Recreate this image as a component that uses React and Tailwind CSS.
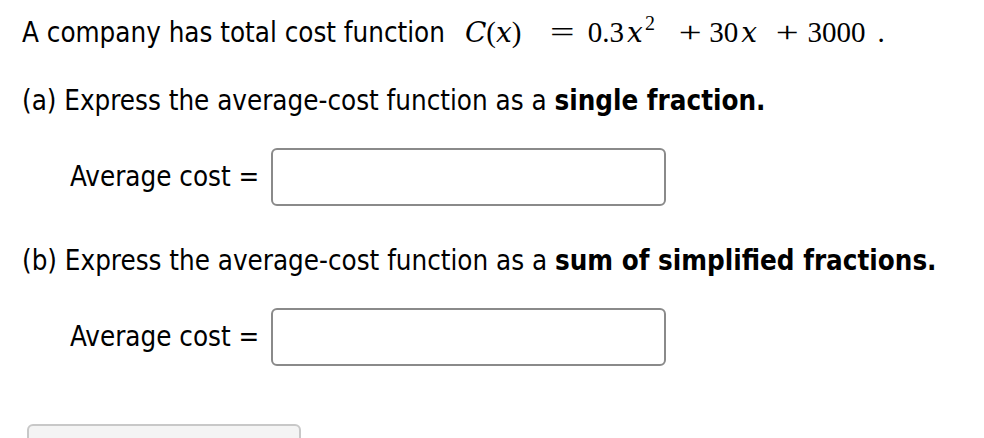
import React from 'react';

const sans = { fontFamily: '"DejaVu Sans Condensed", "DejaVu Sans", sans-serif' };
const serif = { fontFamily: '"Liberation Serif", "DejaVu Serif", serif' };
const mathVar = { fontFamily: '"DejaVu Serif", "Liberation Serif", serif' };

// italic math letter
const V = ({ children, className = '' }) => (
  <i className={`text-[28px] font-normal ${className}`} style={mathVar}>{children}</i>
);

const AnswerRow = () => (
  <div className="flex items-center pl-[48px] h-[58px]">
    <span className="text-[27.5px] text-black mr-[12px]">Average cost =</span>
    <div className="w-[395px] h-[58px] border-2 border-[#8a8a8a] rounded-[6px] bg-white"></div>
  </div>
);

const Formula = () => (
  <span className="text-[29px] ml-[20px] flex items-baseline" style={serif}>
    <span><V>C</V>(<V>x</V>)</span>
    <span className="ml-[33px] scale-x-[1.5]">=</span>
    <span className="ml-[17px]">0.3<V className="ml-[3px]">x</V></span>
    <span className="ml-[2px] text-[20px] relative -top-[12px]">2</span>
    <span className="ml-[27px] scale-x-[1.4]">+</span>
    <span className="ml-[11px]">30<V className="ml-[3px]">x</V></span>
    <span className="ml-[22px] scale-x-[1.4]">+</span>
    <span className="ml-[12px]">3000</span>
    <span className="ml-[12px]">.</span>
  </span>
);

const App = () => {
  return (
    <div className="w-[984px] h-[438px] bg-white overflow-hidden pl-[22px] pt-[11px] text-black" style={sans}>
      <p className="text-[27.5px] leading-[42px] h-[42px] flex items-baseline whitespace-nowrap">
        <span>A company has total cost function</span>
        <Formula />
      </p>
      <p className="text-[27.5px] leading-[42px] mt-[26px]">
        (a) Express the average-cost function as a <b>single fraction.</b>
      </p>
      <div className="mt-[27px]">
        <AnswerRow />
      </div>
      <p className="text-[27.5px] leading-[42px] mt-[33px]">
        (b) Express the average-cost function as a <b>sum of simplified fractions.</b>
      </p>
      <div className="mt-[27px]">
        <AnswerRow />
      </div>
      <div className="mt-[58px] ml-[5px] w-[274px] h-[40px] border-2 border-[#c8c8c8] rounded-[6px] bg-[#f4f4f4]"></div>
    </div>
  );
};

export default App;
